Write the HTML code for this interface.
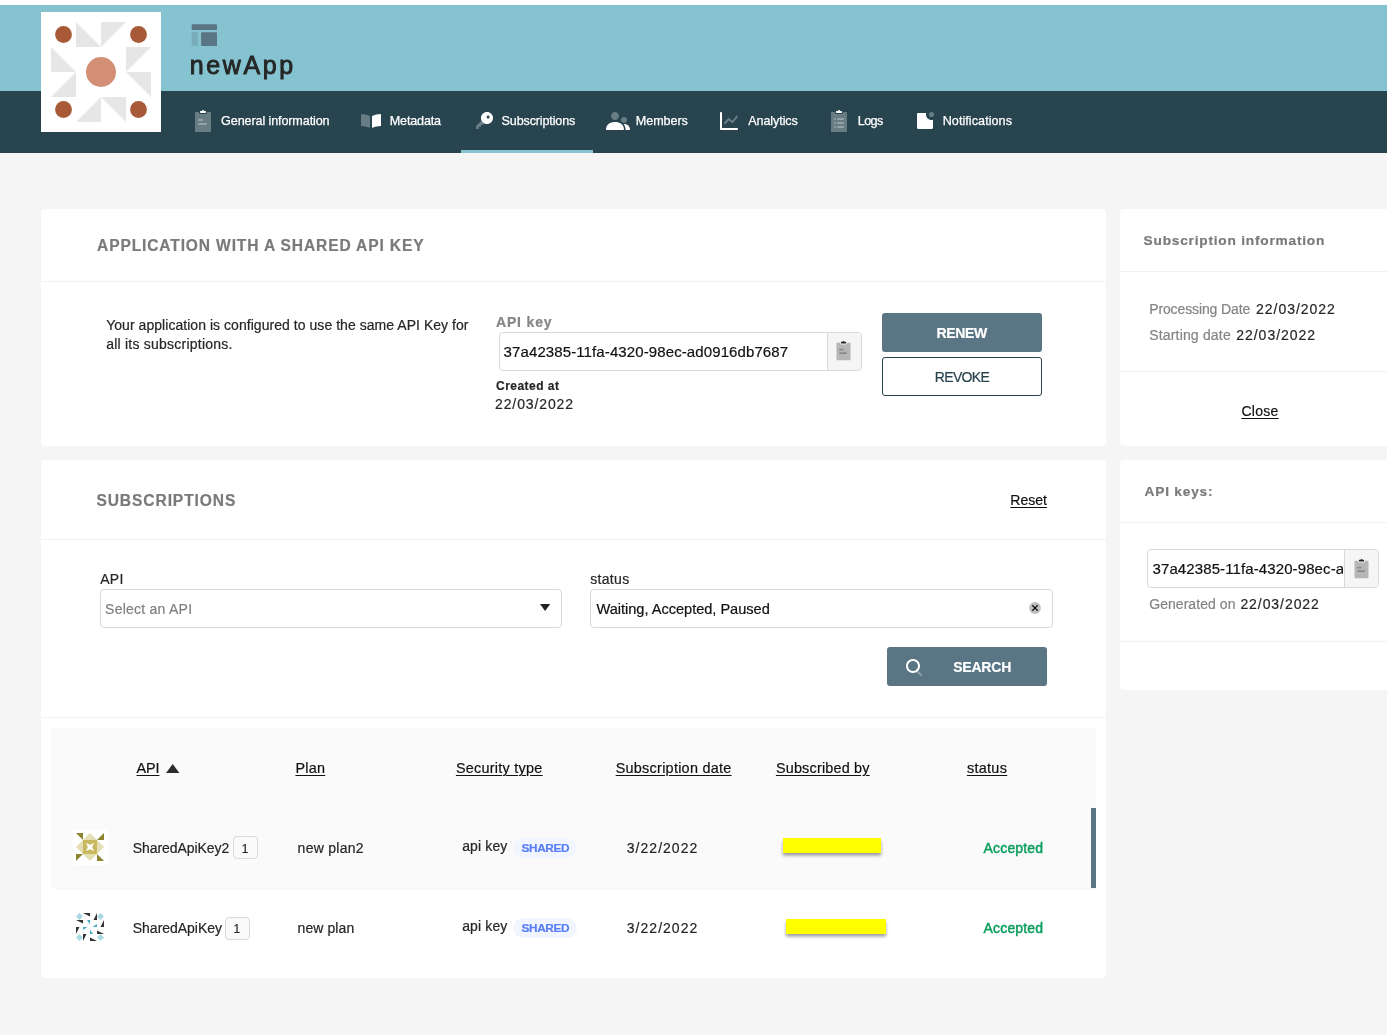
<!DOCTYPE html>
<html lang="en">
<head>
<meta charset="utf-8">
<title>newApp - Subscriptions</title>
<style>
*{box-sizing:border-box}
html,body{margin:0;padding:0}
html{background:#f5f5f5}
body{width:1387px;height:1035px;overflow:hidden;background:#f5f5f5;font-family:"Liberation Sans", sans-serif;color:#262626;position:relative;will-change:transform}
.t{position:absolute;white-space:nowrap;display:block;-webkit-text-stroke:.2px currentColor}
.ic{position:absolute;display:block;overflow:visible}
.topstrip{position:absolute;left:0;top:0;width:1387px;height:5px;background:#fff}
.hdr{position:absolute;left:0;top:5px;width:1387px;height:86px;background:#86c3d0}
.nav{position:absolute;left:0;top:91px;width:1387px;height:62px;background:#28444f}
.nav .active{position:absolute;background:#86c3d0}
.logo{position:absolute;left:41px;top:12px;width:120px;height:120px;background:#fff}
.card{position:absolute;background:#fff;border-radius:4px;display:block}
.hr{position:absolute;left:0;right:0;height:1px;background:#f2f2f2}
.inp{position:absolute;background:#fff;border:1px solid #d9d9d9;border-radius:4px}
.addon{position:absolute;top:0;bottom:0;background:#f5f5f5;border-left:1px solid #d9d9d9;border-radius:0 3px 3px 0}
.btn{position:absolute;border-radius:3px}
.btn.pri{background:#5a7684}
.btn.out{background:#fff;border:1px solid #28444f}
.tbg{position:absolute;background:#fafafa}
.rowline{position:absolute;height:2px;background:#f7f7f7;border-radius:0 0 0 3px}
.sel{position:absolute;background:#5a7684}
.ibox{position:absolute;width:35px;height:35px;background:#fff}
.cnt{position:absolute;width:24.4px;height:23.3px;border:1px solid #d9d9d9;border-radius:4px;background:#fafafa}
.tag{position:absolute;width:64px;height:20px;border-radius:10px;background:#f0f5ff}
.redact{position:absolute;background:#ffff00;box-shadow:0 2.5px 3px rgba(30,30,55,.45)}
.clip{position:absolute;overflow:hidden}
</style>
</head>
<body>
<div class="topstrip"></div>
<header class="hdr">
<svg class="ic" style="left:189px;top:13.7px" width="32" height="32" viewBox="0 0 24 24" fill="#5a7684" ><rect x="2" y="4" width="19" height="4.3" rx=".4"/><rect opacity=".3" x="2" y="10" width="4.7" height="10.3" rx=".4"/><rect x="9.1" y="10" width="11.9" height="10.3" rx=".4"/></svg>
<span class="t" style="left:189.80px;top:42.90px;font-size:25px;line-height:35px;color:#262626;letter-spacing:2.620px;-webkit-text-stroke:.9px #262626;">newApp</span>
</header>
<nav class="nav">
<svg class="ic" style="left:191px;top:18px" width="24" height="24" viewBox="0 0 24 24" fill="#fff" ><path opacity=".3" d="M8,3 L8,3.5 C8,4.32842712 8.67157288,5 9.5,5 L14.5,5 C15.3284271,5 16,4.32842712 16,3.5 L16,3 L19.4,3 C19.73,3 20,3.27 20,3.6 L20,22.4 C20,22.73 19.73,23 19.4,23 L4.6,23 C4.27,23 4,22.73 4,22.4 L4,3.6 C4,3.27 4.27,3 4.6,3 L8,3 Z"/><path d="M11,2 C11,1.44771525 11.4477153,1 12,1 C12.5522847,1 13,1.44771525 13,2 L14.5,2 C14.7761424,2 15,2.22385763 15,2.5 L15,3.5 C15,3.77614237 14.7761424,4 14.5,4 L9.5,4 C9.22385763,4 9,3.77614237 9,3.5 L9,2.5 C9,2.22385763 9.22385763,2 9.5,2 L11,2 Z"/><rect opacity=".3" x="7" y="10" width="5" height="2" rx="1"/><rect opacity=".3" x="7" y="14" width="9" height="2" rx="1"/></svg>
<span class="t" style="left:221.10px;top:20.90px;font-size:12.6px;line-height:18px;color:#fff;letter-spacing:-0.117px;-webkit-text-stroke:.25px #fff;">General information</span>
<svg class="ic" style="left:359px;top:18px" width="24" height="24" viewBox="0 0 24 24" fill="#fff" ><path d="M13.6855025,18.7082217 C15.9113859,17.8189707 18.682885,17.2495635 22,17 C22,16.9325178 22,13.1012863 22,5.50630526 L21.9999762,5.50630526 C21.9999762,5.23017604 21.7761292,5.00632908 21.5,5.00632908 C21.4957817,5.00632908 21.4915635,5.00638247 21.4873465,5.00648922 C18.658231,5.07811173 15.8291155,5.74261533 13,7 C13,7.04449645 13,10.79246 13,18.2438906 L12.9999854,18.2438906 C12.9999854,18.520041 13.2238496,18.7439052 13.5,18.7439052 C13.5635398,18.7439052 13.6264972,18.7317946 13.6855025,18.7082217 Z"/><path opacity=".3" d="M10.3144829,18.7082217 C8.08859955,17.8189707 5.31710038,17.2495635 1.99998542,17 C1.99998542,16.9325178 1.99998542,13.1012863 1.99998542,5.50630526 L2.00000925,5.50630526 C2.00000925,5.23017604 2.22385621,5.00632908 2.49998542,5.00632908 C2.50420375,5.00632908 2.5084219,5.00638247 2.51263888,5.00648922 C5.34175439,5.07811173 8.17086991,5.74261533 10.9999854,7 C10.9999854,7.04449645 10.9999854,10.79246 10.9999854,18.2438906 L11,18.2438906 C11,18.520041 10.7761358,18.7439052 10.4999854,18.7439052 C10.4364457,18.7439052 10.3734882,18.7317946 10.3144829,18.7082217 Z"/></svg>
<span class="t" style="left:389.80px;top:20.90px;font-size:12.6px;line-height:18px;color:#fff;letter-spacing:-0.171px;-webkit-text-stroke:.25px #fff;">Metadata</span>
<svg class="ic" style="left:471px;top:18px" width="24" height="24" viewBox="0 0 24 24" fill="#fff" ><polygon opacity=".3" transform="translate(8.885842,16.114158) rotate(-315) translate(-8.885842,-16.114158)" points="6.89784488 10.6187476 6.76452164 19.4882481 8.88584198 21.6095684 11.0071623 19.4882481 9.59294876 18.0740345 10.9659914 16.7009919 9.55177787 15.2867783 11.0071623 13.8313939 10.8837471 10.6187476"/><path transform="translate(15.985281,8.985281) rotate(-315) translate(-15.985281,-8.985281)" d="M15.9852814,14.9852814 C12.6715729,14.9852814 9.98528137,12.2989899 9.98528137,8.98528137 C9.98528137,5.67157288 12.6715729,2.98528137 15.9852814,2.98528137 C19.2989899,2.98528137 21.9852814,5.67157288 21.9852814,8.98528137 C21.9852814,12.2989899 19.2989899,14.9852814 15.9852814,14.9852814 Z M16.1776695,9.07106781 C17.0060967,9.07106781 17.6776695,8.39949494 17.6776695,7.57106781 C17.6776695,6.74264069 17.0060967,6.07106781 16.1776695,6.07106781 C15.3492424,6.07106781 14.6776695,6.74264069 14.6776695,7.57106781 C14.6776695,8.39949494 15.3492424,9.07106781 16.1776695,9.07106781 Z"/></svg>
<span class="t" style="left:501.60px;top:20.90px;font-size:12.6px;line-height:18px;color:#fff;letter-spacing:-0.158px;-webkit-text-stroke:.25px #fff;">Subscriptions</span>
<svg class="ic" style="left:605.9px;top:18px" width="24" height="24" viewBox="0 0 24 24" fill="#fff" ><path opacity=".3" d="M18,14 C16.3431458,14 15,12.6568542 15,11 C15,9.34314575 16.3431458,8 18,8 C19.6568542,8 21,9.34314575 21,11 C21,12.6568542 19.6568542,14 18,14 Z M9,11 C6.790861,11 5,9.209139 5,7 C5,4.790861 6.790861,3 9,3 C11.209139,3 13,4.790861 13,7 C13,9.209139 11.209139,11 9,11 Z"/><path d="M17.6011961,15.0006174 C21.0077043,15.0378534 23.7891749,16.7601418 23.9984937,20.4 C24.0069246,20.5466056 23.9984937,21 23.4559499,21 L19.6,21 C19.6,18.7490654 18.8562935,16.6718327 17.6011961,15.0006174 Z M0.00065168429,20.1992055 C0.388258525,15.4265159 4.26191235,13 8.98334134,13 C13.7712164,13 17.7048837,15.2931929 17.9979143,20.2 C18.0095879,20.3954741 17.9979143,21 17.2466999,21 C13.541124,21 8.03472472,21 0.727502227,21 C0.476712155,21 -0.0204617505,20.45918 0.00065168429,20.1992055 Z"/></svg>
<span class="t" style="left:635.80px;top:20.90px;font-size:12.6px;line-height:18px;color:#fff;letter-spacing:-0.067px;-webkit-text-stroke:.25px #fff;">Members</span>
<svg class="ic" style="left:717px;top:18px" width="24" height="24" viewBox="0 0 24 24" fill="#fff" ><path d="M5,19 L20,19 C20.5522847,19 21,19.4477153 21,20 C21,20.5522847 20.5522847,21 20,21 L4,21 C3.44771525,21 3,20.5522847 3,20 L3,4 C3,3.44771525 3.44771525,3 4,3 C4.55228475,3 5,3.44771525 5,4 L5,19 Z"/><path opacity=".3" d="M8.7295372,14.6839411 C8.35180695,15.0868534 7.71897114,15.1072675 7.31605887,14.7295372 C6.9131466,14.3518069 6.89273254,13.7189711 7.2704628,13.3160589 L11.0204628,9.31605887 C11.3857725,8.92639521 11.9928179,8.89260288 12.3991193,9.23931335 L15.358855,11.7649545 L19.2151172,6.88035571 C19.5573373,6.44687693 20.1861655,6.37289714 20.6196443,6.71511723 C21.0531231,7.05733733 21.1271029,7.68616551 20.7848828,8.11964429 L16.2848828,13.8196443 C15.9333973,14.2648593 15.2823707,14.3288915 14.8508807,13.9606866 L11.8268294,11.3801628 L8.7295372,14.6839411 Z"/></svg>
<span class="t" style="left:748.30px;top:20.90px;font-size:12.6px;line-height:18px;color:#fff;letter-spacing:-0.112px;-webkit-text-stroke:.25px #fff;">Analytics</span>
<svg class="ic" style="left:827px;top:18px" width="24" height="24" viewBox="0 0 24 24" fill="#fff" ><path opacity=".3" d="M8,3 L8,3.5 C8,4.32842712 8.67157288,5 9.5,5 L14.5,5 C15.3284271,5 16,4.32842712 16,3.5 L16,3 L19.4,3 C19.73,3 20,3.27 20,3.6 L20,22.4 C20,22.73 19.73,23 19.4,23 L4.6,23 C4.27,23 4,22.73 4,22.4 L4,3.6 C4,3.27 4.27,3 4.6,3 L8,3 Z"/><path d="M11,2 C11,1.44771525 11.4477153,1 12,1 C12.5522847,1 13,1.44771525 13,2 L14.5,2 C14.7761424,2 15,2.22385763 15,2.5 L15,3.5 C15,3.77614237 14.7761424,4 14.5,4 L9.5,4 C9.22385763,4 9,3.77614237 9,3.5 L9,2.5 C9,2.22385763 9.22385763,2 9.5,2 L11,2 Z"/><rect opacity=".3" x="7" y="9" width="2" height="2" rx="1"/><rect opacity=".3" x="10" y="9" width="7" height="2" rx="1"/><rect opacity=".3" x="7" y="13" width="2" height="2" rx="1"/><rect opacity=".3" x="10" y="13" width="7" height="2" rx="1"/><rect opacity=".3" x="7" y="17" width="2" height="2" rx="1"/><rect opacity=".3" x="10" y="17" width="7" height="2" rx="1"/></svg>
<span class="t" style="left:857.80px;top:20.90px;font-size:12.6px;line-height:18px;color:#fff;letter-spacing:-0.633px;-webkit-text-stroke:.25px #fff;">Logs</span>
<svg class="ic" style="left:912.6px;top:18px" width="24" height="24" viewBox="0 0 24 24" fill="#fff" ><path d="M13.2070325,4 C13.0721672,4.47683179 13,4.97998812 13,5.5 C13,8.53756612 15.4624339,11 18.5,11 C19.0200119,11 19.5231682,10.9278328 20,10.7929675 L20,18.8 C20,19.46 19.46,20 18.8,20 L5.2,20 C4.54,20 4,19.46 4,18.8 L4,5.2 C4,4.54 4.54,4 5.2,4 L13.2070325,4 Z"/><circle opacity=".3" cx="18.5" cy="5.5" r="2.5"/></svg>
<span class="t" style="left:942.70px;top:20.90px;font-size:12.6px;line-height:18px;color:#fff;letter-spacing:0.058px;-webkit-text-stroke:.25px #fff;">Notifications</span>
<div class="active" style="left:461px;top:59px;width:132px;height:3px"></div>
</nav>
<div class="logo"><svg width="100" height="100" viewBox="0 0 100 100" style="position:absolute;left:10px;top:10px"><polygon points="25,0 25,25 50,25" fill="#e6e6e6"/><polygon points="50,0 75,0 50,25" fill="#e6e6e6"/><polygon points="75,25 100,25 75,50" fill="#e6e6e6"/><polygon points="75,50 100,50 100,75" fill="#e6e6e6"/><polygon points="50,75 75,75 75,100" fill="#e6e6e6"/><polygon points="50,75 50,100 25,100" fill="#e6e6e6"/><polygon points="25,50 25,75 0,75" fill="#e6e6e6"/><polygon points="0,25 0,50 25,50" fill="#e6e6e6"/><circle cx="12.5" cy="12.5" r="8.4" fill="#a85a38"/><circle cx="87.5" cy="12.5" r="8.4" fill="#a85a38"/><circle cx="87.5" cy="87.5" r="8.4" fill="#a85a38"/><circle cx="12.5" cy="87.5" r="8.4" fill="#a85a38"/><circle cx="50" cy="50" r="15" fill="#d28f76"/></svg></div>
<section class="card" style="left:41px;top:209px;width:1065px;height:237px">
<span class="t" style="left:56.10px;top:25.90px;font-size:15.6px;line-height:22px;color:#7a7a7a;font-weight:700;letter-spacing:0.844px;">APPLICATION WITH A SHARED API KEY</span>
<div class="hr" style="top:72px"></div>
<span class="t" style="left:65.20px;top:106.00px;font-size:14px;line-height:20px;color:#262626;letter-spacing:0.044px;">Your application is configured to use the same API Key for</span>
<span class="t" style="left:65.20px;top:125.00px;font-size:14px;line-height:20px;color:#262626;letter-spacing:0.233px;">all its subscriptions.</span>
<span class="t" style="left:455.00px;top:103.20px;font-size:14px;line-height:20px;color:#858585;font-weight:700;letter-spacing:0.833px;">API key</span>
<div class="inp" style="left:458px;top:123px;width:363px;height:39px"><div class="addon" style="left:327px;width:34px"></div>
<svg class="ic" style="left:333.4px;top:7.3px" width="21" height="21" viewBox="0 0 24 24" fill="#262626" ><path opacity=".3" d="M8,3 L8,3.5 C8,4.32842712 8.67157288,5 9.5,5 L14.5,5 C15.3284271,5 16,4.32842712 16,3.5 L16,3 L19.4,3 C19.73,3 20,3.27 20,3.6 L20,22.4 C20,22.73 19.73,23 19.4,23 L4.6,23 C4.27,23 4,22.73 4,22.4 L4,3.6 C4,3.27 4.27,3 4.6,3 L8,3 Z"/><path d="M11,2 C11,1.44771525 11.4477153,1 12,1 C12.5522847,1 13,1.44771525 13,2 L14.5,2 C14.7761424,2 15,2.22385763 15,2.5 L15,3.5 C15,3.77614237 14.7761424,4 14.5,4 L9.5,4 C9.22385763,4 9,3.77614237 9,3.5 L9,2.5 C9,2.22385763 9.22385763,2 9.5,2 L11,2 Z"/><rect opacity=".3" x="7" y="10" width="5" height="2" rx="1"/><rect opacity=".3" x="7" y="14" width="9" height="2" rx="1"/></svg>
</div>
<span class="t" style="left:462.60px;top:131.90px;font-size:15px;line-height:21px;color:#111;letter-spacing:0.106px;">37a42385-11fa-4320-98ec-ad0916db7687</span>
<span class="t" style="left:455.00px;top:169.00px;font-size:12px;line-height:17px;color:#262626;font-weight:700;letter-spacing:0.478px;">Created at</span>
<span class="t" style="left:454.00px;top:184.80px;font-size:14px;line-height:20px;color:#262626;letter-spacing:0.889px;">22/03/2022</span>
<div class="btn pri" style="left:841px;top:104px;width:160px;height:39px"></div>
<span class="t" style="left:895.50px;top:113.70px;font-size:14px;line-height:20px;color:#fff;font-weight:700;letter-spacing:-0.375px;">RENEW</span>
<div class="btn out" style="left:841px;top:148px;width:160px;height:39px"></div>
<span class="t" style="left:893.80px;top:157.80px;font-size:14px;line-height:20px;color:#28444f;letter-spacing:-0.680px;">REVOKE</span>
</section>
<section class="card" style="left:41px;top:460px;width:1065px;height:518px">
<span class="t" style="left:55.40px;top:29.90px;font-size:15.6px;line-height:22px;color:#7a7a7a;font-weight:700;letter-spacing:0.900px;">SUBSCRIPTIONS</span>
<span class="t" style="left:969.30px;top:29.80px;font-size:14px;line-height:20px;color:#111;letter-spacing:0.025px;text-decoration:underline;text-underline-offset:2px;">Reset</span>
<div class="hr" style="top:79px"></div>
<span class="t" style="left:59.20px;top:108.60px;font-size:14px;line-height:20px;color:#262626;letter-spacing:0.300px;">API</span>
<div class="inp" style="left:59px;top:129px;width:462px;height:39px"></div>
<span class="t" style="left:64.10px;top:138.80px;font-size:14px;line-height:20px;color:#7f7f7f;letter-spacing:0.242px;">Select an API</span>
<svg class="ic" style="left:498.9px;top:144px" width="10.2" height="7.1" viewBox="0 0 10.2 7.1"><polygon points="0,0 10.2,0 5.1,7.1" fill="#222"/></svg>
<span class="t" style="left:549.20px;top:109.00px;font-size:14px;line-height:20px;color:#262626;letter-spacing:0.320px;">status</span>
<div class="inp" style="left:549px;top:129px;width:463px;height:39px"></div>
<span class="t" style="left:555.50px;top:139.00px;font-size:14.6px;line-height:20px;color:#111;letter-spacing:-0.025px;">Waiting, Accepted, Paused</span>
<svg class="ic" style="left:988px;top:141.9px" width="12" height="12" viewBox="0 0 12 12"><circle cx="6" cy="6" r="5.9" fill="#bfbfbf"/><path d="M3.3 3.3 L8.7 8.7 M8.7 3.3 L3.3 8.7" stroke="#111" stroke-width="1.25"/></svg>
<div class="btn pri" style="left:846px;top:187px;width:160px;height:39px"></div>
<svg class="ic" style="left:860.7px;top:194.79999999999995px" width="24" height="24" viewBox="0 0 24 24" fill="#fff" ><path opacity=".3" d="M14.2928932,16.7071068 C13.9023689,16.3165825 13.9023689,15.6834175 14.2928932,15.2928932 C14.6834175,14.9023689 15.3165825,14.9023689 15.7071068,15.2928932 L19.7071068,19.2928932 C20.0976311,19.6834175 20.0976311,20.3165825 19.7071068,20.7071068 C19.3165825,21.0976311 18.6834175,21.0976311 18.2928932,20.7071068 L14.2928932,16.7071068 Z"/><path d="M11,16 C13.7614237,16 16,13.7614237 16,11 C16,8.23857625 13.7614237,6 11,6 C8.23857625,6 6,8.23857625 6,11 C6,13.7614237 8.23857625,16 11,16 Z M11,18 C7.13400675,18 4,14.8659932 4,11 C4,7.13400675 7.13400675,4 11,4 C14.8659932,4 18,7.13400675 18,11 C18,14.8659932 14.8659932,18 11,18 Z"/></svg>
<span class="t" style="left:912.20px;top:196.90px;font-size:14px;line-height:20px;color:#fff;font-weight:700;letter-spacing:-0.200px;">SEARCH</span>
<div class="hr" style="top:257px"></div>
<div class="tbg" style="left:10px;top:268px;width:1045px;height:160px"></div>
<div class="rowline" style="left:14px;top:428px;width:1041px"></div>
<div class="sel" style="left:1050px;top:348px;width:5px;height:80px"></div>
<span class="t" style="left:95.50px;top:298.30px;font-size:14.4px;line-height:20px;color:#111;letter-spacing:-0.100px;text-decoration:underline;text-underline-offset:2px;">API</span>
<span class="t" style="left:254.40px;top:298.30px;font-size:14.4px;line-height:20px;color:#111;letter-spacing:0.267px;text-decoration:underline;text-underline-offset:2px;">Plan</span>
<span class="t" style="left:414.90px;top:298.30px;font-size:14.4px;line-height:20px;color:#111;letter-spacing:0.275px;text-decoration:underline;text-underline-offset:2px;">Security type</span>
<span class="t" style="left:574.70px;top:298.30px;font-size:14.4px;line-height:20px;color:#111;letter-spacing:0.275px;text-decoration:underline;text-underline-offset:2px;">Subscription date</span>
<span class="t" style="left:734.90px;top:298.30px;font-size:14.4px;line-height:20px;color:#111;letter-spacing:0.200px;text-decoration:underline;text-underline-offset:2px;">Subscribed by</span>
<span class="t" style="left:925.90px;top:298.30px;font-size:14.4px;line-height:20px;color:#111;letter-spacing:0.320px;text-decoration:underline;text-underline-offset:2px;">status</span>
<svg class="ic" style="left:125.30000000000001px;top:304.29999999999995px" width="13.4" height="9" viewBox="0 0 13.4 9"><polygon points="0,9 13.4,9 6.7,0" fill="#2b2b2b"/></svg>
<div class="ibox" style="left:32px;top:370px"></div>
<svg class="ic" style="left:35px;top:373px" width="28" height="28" viewBox="0 0 28 28"><polygon points="0,0 7,0 7,7" fill="#8c8430"/><polygon points="28,0 28,7 21,7" fill="#8c8430"/><polygon points="28,28 21,28 21,21" fill="#8c8430"/><polygon points="0,21 7,21 0,28" fill="#8c8430"/><polygon points="7,7 14,0 21,7" fill="#e4dfb3"/><polygon points="21,7 28,14 21,21" fill="#e4dfb3"/><polygon points="7,21 14,28 21,21" fill="#e4dfb3"/><polygon points="7,7 0,14 7,21" fill="#e4dfb3"/><rect x="7" y="7" width="14" height="14" fill="#c8b95f"/><polygon points="10,10 14,11.8 18,10 16.2,14 18,18 14,16.2 10,18 11.8,14" fill="#fff"/></svg>
<span class="t" style="left:91.80px;top:378.20px;font-size:14px;line-height:20px;color:#262626;letter-spacing:-0.067px;">SharedApiKey2</span>
<div class="cnt" style="left:192.3px;top:376.2px"></div>
<span class="t" style="left:200.70px;top:381.20px;font-size:12px;line-height:17px;color:#262626;">1</span>
<span class="t" style="left:256.60px;top:378.20px;font-size:14px;line-height:20px;color:#262626;letter-spacing:0.275px;">new plan2</span>
<span class="t" style="left:421.20px;top:375.70px;font-size:14px;line-height:20px;color:#262626;letter-spacing:0.133px;">api key</span>
<div class="tag" style="left:472px;top:378px"></div>
<span class="t" style="left:480.50px;top:379.80px;font-size:11.8px;line-height:17px;color:#597ef7;font-weight:700;letter-spacing:-0.380px;">SHARED</span>
<span class="t" style="left:585.80px;top:378.20px;font-size:14px;line-height:20px;color:#262626;letter-spacing:1.025px;">3/22/2022</span>
<div class="redact" style="left:741.9px;top:378.0px;width:98.3px;height:15px"></div>
<span class="t" style="left:942.60px;top:378.20px;font-size:14px;line-height:20px;color:#0a9d5c;letter-spacing:0.157px;-webkit-text-stroke:.45px #0a9d5c;">Accepted</span>
<svg class="ic" style="left:35px;top:453px" width="28" height="28" viewBox="0 0 28 28"><polygon points="7,0 14,0 14,3.5" fill="#333333"/><polygon points="21,0 21,7 17.5,7" fill="#333333"/><polygon points="11,7 14,7 14,11.5" fill="#48adc0"/><polygon points="0,3.5 3.5,0 7,3.5 3.5,7" fill="#a9d9e1"/><polygon points="28,7 28,14 24.5,14" fill="#333333"/><polygon points="28,21 21,21 21,17.5" fill="#333333"/><polygon points="21,11 21,14 16.5,14" fill="#48adc0"/><polygon points="24.5,0 28,3.5 24.5,7 21,3.5" fill="#a9d9e1"/><polygon points="21,28 14,28 14,24.5" fill="#333333"/><polygon points="7,28 7,21 10.5,21" fill="#333333"/><polygon points="17,21 14,21 14,16.5" fill="#48adc0"/><polygon points="28,24.5 24.5,28 21,24.5 24.5,21" fill="#a9d9e1"/><polygon points="0,21 0,14 3.5,14" fill="#333333"/><polygon points="0,7 7,7 7,10.5" fill="#333333"/><polygon points="7,17 7,14 11.5,14" fill="#48adc0"/><polygon points="3.5,28 0,24.5 3.5,21 7,24.5" fill="#a9d9e1"/></svg>
<span class="t" style="left:91.80px;top:458.20px;font-size:14px;line-height:20px;color:#262626;letter-spacing:-0.027px;">SharedApiKey</span>
<div class="cnt" style="left:184.2px;top:456.7px"></div>
<span class="t" style="left:192.60px;top:461.20px;font-size:12px;line-height:17px;color:#262626;">1</span>
<span class="t" style="left:256.60px;top:458.20px;font-size:14px;line-height:20px;color:#262626;letter-spacing:.08px;">new plan</span>
<span class="t" style="left:421.20px;top:455.70px;font-size:14px;line-height:20px;color:#262626;letter-spacing:0.133px;">api key</span>
<div class="tag" style="left:472px;top:458px"></div>
<span class="t" style="left:480.50px;top:459.80px;font-size:11.8px;line-height:17px;color:#597ef7;font-weight:700;letter-spacing:-0.380px;">SHARED</span>
<span class="t" style="left:585.80px;top:458.20px;font-size:14px;line-height:20px;color:#262626;letter-spacing:1.025px;">3/22/2022</span>
<div class="redact" style="left:745.0px;top:459.0px;width:99.9px;height:15px"></div>
<span class="t" style="left:942.60px;top:458.20px;font-size:14px;line-height:20px;color:#0a9d5c;letter-spacing:0.157px;-webkit-text-stroke:.45px #0a9d5c;">Accepted</span>
</section>
<aside class="card" style="left:1120px;top:209px;width:280px;height:237px">
<span class="t" style="left:23.60px;top:22.20px;font-size:13.7px;line-height:19px;color:#7a7a7a;font-weight:700;letter-spacing:0.783px;">Subscription information</span>
<div class="hr" style="top:62px"></div>
<span class="t" style="left:29.20px;top:89.90px;font-size:14px;line-height:20px;color:#848484;letter-spacing:-0.121px;">Processing Date</span>
<span class="t" style="left:136.10px;top:89.90px;font-size:14px;line-height:20px;color:#262626;letter-spacing:0.967px;">22/03/2022</span>
<span class="t" style="left:29.20px;top:116.00px;font-size:14px;line-height:20px;color:#848484;letter-spacing:0.175px;">Starting date</span>
<span class="t" style="left:116.20px;top:116.00px;font-size:14px;line-height:20px;color:#262626;letter-spacing:0.989px;">22/03/2022</span>
<div class="hr" style="top:162px"></div>
<span class="t" style="left:121.40px;top:191.70px;font-size:14px;line-height:20px;color:#111;letter-spacing:0.300px;text-decoration:underline;text-underline-offset:2px;">Close</span>
</aside>
<aside class="card" style="left:1120px;top:460px;width:280px;height:230px">
<span class="t" style="left:24.60px;top:22.20px;font-size:13.7px;line-height:19px;color:#7a7a7a;font-weight:700;letter-spacing:0.788px;">API keys:</span>
<div class="hr" style="top:62px"></div>
<div class="inp" style="left:27px;top:89px;width:232px;height:39px"><div class="addon" style="left:196px;width:34px"></div>
<svg class="ic" style="left:202.5px;top:8.3px" width="21" height="21" viewBox="0 0 24 24" fill="#262626" ><path opacity=".3" d="M8,3 L8,3.5 C8,4.32842712 8.67157288,5 9.5,5 L14.5,5 C15.3284271,5 16,4.32842712 16,3.5 L16,3 L19.4,3 C19.73,3 20,3.27 20,3.6 L20,22.4 C20,22.73 19.73,23 19.4,23 L4.6,23 C4.27,23 4,22.73 4,22.4 L4,3.6 C4,3.27 4.27,3 4.6,3 L8,3 Z"/><path d="M11,2 C11,1.44771525 11.4477153,1 12,1 C12.5522847,1 13,1.44771525 13,2 L14.5,2 C14.7761424,2 15,2.22385763 15,2.5 L15,3.5 C15,3.77614237 14.7761424,4 14.5,4 L9.5,4 C9.22385763,4 9,3.77614237 9,3.5 L9,2.5 C9,2.22385763 9.22385763,2 9.5,2 L11,2 Z"/><rect opacity=".3" x="7" y="10" width="5" height="2" rx="1"/><rect opacity=".3" x="7" y="14" width="9" height="2" rx="1"/></svg>
</div>
<div class="clip" style="left:30px;top:92px;width:192.5999999999999px;height:33px">
<span class="t" style="left:2.50px;top:5.90px;font-size:15px;line-height:21px;color:#111;letter-spacing:0.106px;">37a42385-11fa-4320-98ec-ad0916db7687</span>
</div>
<span class="t" style="left:29.20px;top:133.60px;font-size:14px;line-height:20px;color:#848484;letter-spacing:0.055px;">Generated on</span>
<span class="t" style="left:120.40px;top:133.60px;font-size:14px;line-height:20px;color:#262626;letter-spacing:0.933px;">22/03/2022</span>
<div class="hr" style="top:181px"></div>
</aside>
</body>
</html>
